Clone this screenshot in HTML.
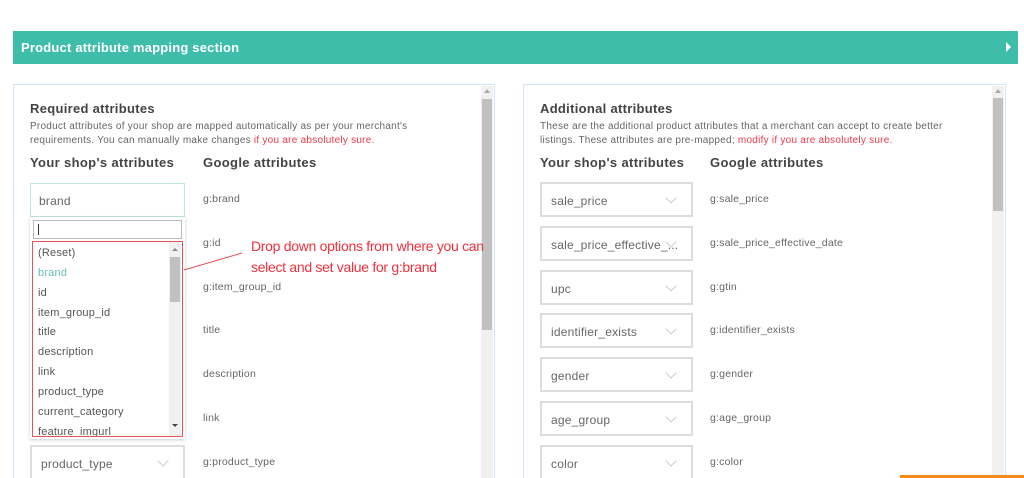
<!DOCTYPE html>
<html><head><style>
html,body{margin:0;width:1024px;height:478px;overflow:hidden}
body{background:#fff;font-family:"Liberation Sans",sans-serif;position:relative;color:#555}
.a{position:absolute}
.hdr{left:13px;top:31px;width:1005px;height:33px;background:#3dbdaa;color:#fff;font-weight:bold;font-size:13px;letter-spacing:.2px}
.panel{border:1px solid #d3e5f8;background:#fff}
.sb{background:#f1f1f1}
.th{background:#c1c1c1}
h3{margin:0;font-size:13px;color:#444;font-weight:bold;letter-spacing:.3px}
.desc{font-size:10px;color:#666;line-height:14px;letter-spacing:.25px}
.red{color:#f0394b}
.ch{font-size:13px;color:#444;font-weight:bold;letter-spacing:.35px}
.g{font-size:10.5px;color:#666;letter-spacing:.2px}
.sel{border:2px solid #ddd;box-sizing:border-box;font-size:12px;color:#666;padding-left:9px;line-height:34px;height:35px;letter-spacing:.2px}
.chev{position:absolute;right:16px;top:10px;width:7px;height:7px;border-right:1px solid #ccc;border-bottom:1px solid #ccc;transform:rotate(45deg)}
.it{position:absolute;left:5px;font-size:11px;color:#555;letter-spacing:.2px}
</style></head><body>
<div class="a hdr"><span class="a" style="left:8px;top:9px">Product attribute mapping section</span>
<span class="a" style="right:7px;top:11px;width:0;height:0;border-left:5px solid #fff;border-top:5px solid transparent;border-bottom:5px solid transparent"></span></div>

<div class="a panel" style="left:13px;top:84px;width:480px;height:400px"></div>
<div class="a sb" style="left:481px;top:86px;width:12px;height:392px"></div>
<div class="a th" style="left:482px;top:99px;width:10px;height:231px"></div>
<div class="a" style="left:484px;top:89px;border-bottom:4px solid #aaa;border-left:3px solid transparent;border-right:3px solid transparent"></div>

<div class="a panel" style="left:523px;top:84px;width:481px;height:400px"></div>
<div class="a sb" style="left:992px;top:86px;width:12px;height:392px"></div>
<div class="a th" style="left:993px;top:98px;width:10px;height:113px"></div>
<div class="a" style="left:995px;top:89px;border-bottom:4px solid #aaa;border-left:3px solid transparent;border-right:3px solid transparent"></div>

<h3 class="a" style="left:30px;top:101px">Required attributes</h3>
<div class="a desc" style="left:30px;top:120px;width:430px">Product attributes of your shop are mapped automatically as per your merchant's requirements. You can manually make changes <span class="red">if you are absolutely sure.</span></div>
<div class="a ch" style="left:30px;top:155px">Your shop's attributes</div>
<div class="a ch" style="left:203px;top:155px">Google attributes</div>

<div class="a" style="left:30px;top:183px;width:155px;height:34px;border:1px solid #bfe6e0;box-sizing:border-box;font-size:12px;color:#666;padding-left:8px;line-height:34px;letter-spacing:.2px">brand</div>
<div class="a" style="left:30px;top:217px;width:155px;height:222px;background:#fff;box-shadow:0 1px 3px rgba(0,0,0,.2)"></div>
<div class="a" style="left:33px;top:220px;width:149px;height:19px;border:1px solid #bbb;box-sizing:border-box"><span class="a" style="left:4px;top:3px;width:1px;height:11px;background:#333"></span></div>
<div class="a" style="left:32px;top:241px;width:151px;height:196px;border:1px solid #e8505a;box-sizing:border-box;overflow:hidden">
<div class="it" style="top:5px">(Reset)</div>
<div class="it" style="top:25px;color:#6bbfb4">brand</div>
<div class="it" style="top:45px">id</div>
<div class="it" style="top:65px">item_group_id</div>
<div class="it" style="top:84px">title</div>
<div class="it" style="top:104px">description</div>
<div class="it" style="top:124px">link</div>
<div class="it" style="top:144px">product_type</div>
<div class="it" style="top:164px">current_category</div>
<div class="it" style="top:184px">feature_imgurl</div>
<div class="a sb" style="left:136px;top:0;width:12px;height:194px"></div>
<div class="a th" style="left:137px;top:15px;width:10px;height:45px"></div>
<div class="a" style="left:139px;top:6px;border-bottom:3px solid #888;border-left:3px solid transparent;border-right:3px solid transparent"></div>
<div class="a" style="left:139px;top:182px;border-top:3px solid #444;border-left:3px solid transparent;border-right:3px solid transparent"></div>
</div>

<div class="a g" style="left:203px;top:193px">g:brand</div>
<div class="a g" style="left:203px;top:237px">g:id</div>
<div class="a g" style="left:203px;top:281px">g:item_group_id</div>
<div class="a g" style="left:203px;top:324px">title</div>
<div class="a g" style="left:203px;top:368px">description</div>
<div class="a g" style="left:203px;top:412px">link</div>
<div class="a g" style="left:203px;top:456px">g:product_type</div>
<div class="a sel" style="left:30px;top:445px;width:155px">product_type<span class="chev"></span></div>

<svg class="a" style="left:180px;top:248px" width="70" height="30"><line x1="4" y1="22" x2="62" y2="5" stroke="#e8505a" stroke-width="1"/></svg>
<div class="a red" style="left:251px;top:236px;font-size:14px;line-height:21px;color:#f0303d;letter-spacing:-.3px">Drop down options from where you can<br>select and set value for g:brand</div>

<h3 class="a" style="left:540px;top:101px">Additional attributes</h3>
<div class="a desc" style="left:540px;top:120px;width:440px">These are the additional product attributes that a merchant can accept to create better listings. These attributes are pre-mapped; <span class="red">modify if you are absolutely sure.</span></div>
<div class="a ch" style="left:540px;top:155px">Your shop's attributes</div>
<div class="a ch" style="left:710px;top:155px">Google attributes</div>

<div class="a sel" style="left:540px;top:182px;width:153px">sale_price<span class="chev"></span></div>
<div class="a sel" style="left:540px;top:226px;width:153px">sale_price_effective_...<span class="chev"></span></div>
<div class="a sel" style="left:540px;top:270px;width:153px">upc<span class="chev"></span></div>
<div class="a sel" style="left:540px;top:313px;width:153px">identifier_exists<span class="chev"></span></div>
<div class="a sel" style="left:540px;top:357px;width:153px">gender<span class="chev"></span></div>
<div class="a sel" style="left:540px;top:401px;width:153px">age_group<span class="chev"></span></div>
<div class="a sel" style="left:540px;top:445px;width:153px">color<span class="chev"></span></div>
<div class="a g" style="left:710px;top:193px">g:sale_price</div>
<div class="a g" style="left:710px;top:237px">g:sale_price_effective_date</div>
<div class="a g" style="left:710px;top:281px">g:gtin</div>
<div class="a g" style="left:710px;top:324px">g:identifier_exists</div>
<div class="a g" style="left:710px;top:368px">g:gender</div>
<div class="a g" style="left:710px;top:412px">g:age_group</div>
<div class="a g" style="left:710px;top:456px">g:color</div>

<div class="a" style="left:900px;top:475px;width:124px;height:3px;background:#f28a1e"></div>
</body></html>
